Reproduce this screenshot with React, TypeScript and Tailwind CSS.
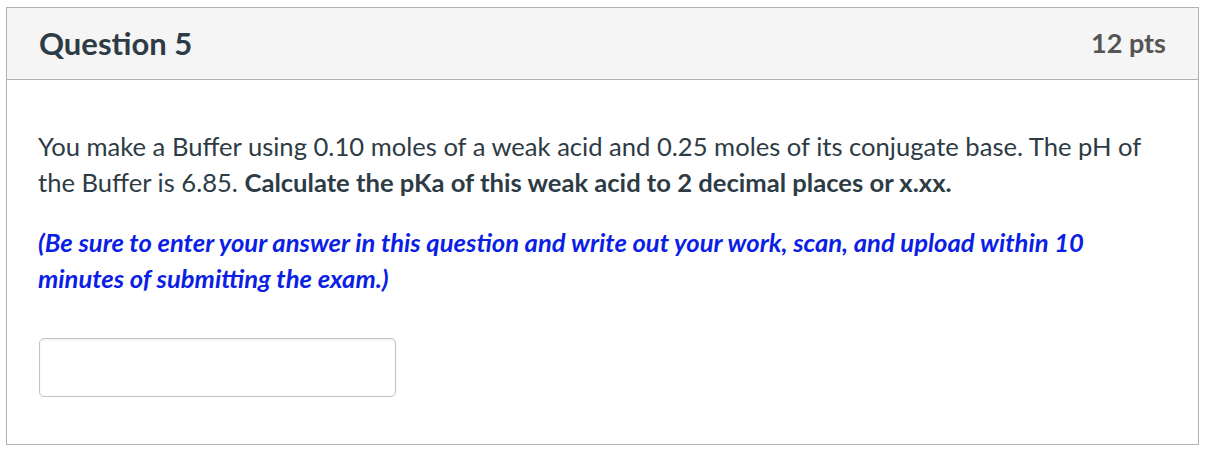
import React from 'react';

export default function App() {
  return (
    <div className="min-h-screen bg-white pt-[7px] pl-[6px] pr-[7px] font-['Lato','Liberation_Sans',sans-serif]">
      <div className="w-[1193px] h-[438px] border border-[#b1b1b1] bg-white">
        <div className="h-[72px] flex items-center justify-between bg-[#f5f5f5] border-b border-[#b1b1b1] pl-[32px] pr-[32px]">
          <h2 className="text-[31px] font-bold text-[#2d3b45]">Question 5</h2>
          <div className="text-[27px] font-bold text-[#555555]">12 pts</div>
        </div>
        <div className="pl-[31px] pr-[30px] pt-[48px]">
          <p className="text-[25.6px] leading-[36px] text-[#2d3b45]">
            You make a Buffer using 0.10 moles of a weak acid and 0.25 moles of its conjugate base. The pH of the Buffer is 6.85.{' '}
            <strong className="font-bold">Calculate the pKa of this weak acid to 2 decimal places or x.xx.</strong>
          </p>
          <p className="mt-[24px] text-[25.6px] leading-[36px] font-bold italic text-[#0b1ee6]">
            (Be sure to enter your answer in this question and write out your work, scan, and upload within 10 minutes of submitting the exam.)
          </p>
          <input
            type="text"
            aria-label="Answer"
            className="mt-[42px] ml-[1px] block w-[357px] h-[59px] rounded-[5px] border border-[#c4c4c4] bg-white shadow-[inset_0_1px_2px_rgba(0,0,0,0.08)] outline-none"
          />
        </div>
      </div>
    </div>
  );
}
